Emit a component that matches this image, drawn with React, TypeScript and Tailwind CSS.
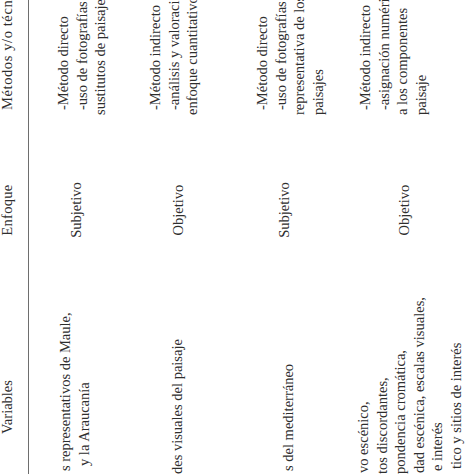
type Line = [string, number];

interface RowProps {
  h?: number;
  grow?: boolean;
  varPt: number;
  enfPt: number;
  metPt: number;
  vars: Line[];
  enf: string;
  mets: string[];
}

function Row({ h, grow, varPt, enfPt, metPt, vars, enf, mets }: RowProps) {
  return (
    <div
      className={grow ? "flex flex-1 items-start" : "flex shrink-0 items-start"}
      style={h ? { height: h } : undefined}
    >
      <div className="flex w-[234px] shrink-0 flex-col" style={{ paddingTop: varPt }}>
        {vars.map(([t, pl], i) => (
          <div key={i} style={{ paddingLeft: pl }}>
            {t}
          </div>
        ))}
      </div>
      <div className="w-[60px] shrink-0 text-center" style={{ paddingTop: enfPt }}>
        {enf}
      </div>
      <div className="flex shrink-0 flex-col pl-[65px]" style={{ paddingTop: metPt }}>
        {mets.map((t, i) => (
          <div key={i} className={t.startsWith("-") ? "pl-[5px]" : ""}>
            {t}
          </div>
        ))}
      </div>
    </div>
  );
}

export default function App() {
  return (
    <div className="h-[474px] w-[474px] overflow-hidden bg-white">
      <div className="flex h-[474px] w-[474px] -rotate-90 flex-col whitespace-nowrap font-['Liberation_Serif','Times_New_Roman',serif] text-[14.5px] leading-[18.5px] text-[#2e2e2e]">
        <div className="flex h-[29px] shrink-0 items-start border-b border-[#6e6e6e]">
          <div className="-mt-[2px] w-[234px] shrink-0 pl-[40px]">Variables</div>
          <div className="-mt-[2px] w-[60px] shrink-0 text-center tracking-[0.3px]">Enfoque</div>
          <div className="-mt-[2px] shrink-0 pl-[70px] tracking-[0.6px]">Métodos y/o técnicas</div>
        </div>

        <Row
          h={92}
          varPt={27}
          enfPt={38}
          metPt={25}
          vars={[
            ["s representativos de Maule,", 3],
            ["y la Araucanía", 8],
          ]}
          enf="Subjetivo"
          mets={["-Método directo", "-uso de fotografías", "sustitutos de paisajes"]}
        />
        <Row
          h={107}
          varPt={47}
          enfPt={48}
          metPt={25}
          vars={[["des visuales del paisaje", 0]]}
          enf="Objetivo"
          mets={["-Método indirecto", "-análisis y valoración", "enfoque cuantitativo"]}
        />
        <Row
          h={103}
          varPt={51}
          enfPt={47}
          metPt={25}
          vars={[["s del mediterráneo", 3]]}
          enf="Subjetivo"
          mets={["-Método directo", "-uso de fotografías", "representativa de los", "paisajes"]}
        />
        <Row
          grow
          varPt={23}
          enfPt={64}
          metPt={25}
          vars={[
            ["vo escénico,", 1],
            ["tos discordantes,", 0],
            ["pondencia cromática,", 0],
            ["dad escénica, escalas visuales,", 1],
            ["e interés", 3],
            ["tico y sitios de interés", 5],
          ]}
          enf="Objetivo"
          mets={["-Método indirecto", "-asignación numérica", "a los componentes", "paisaje"]}
        />
      </div>
    </div>
  );
}
